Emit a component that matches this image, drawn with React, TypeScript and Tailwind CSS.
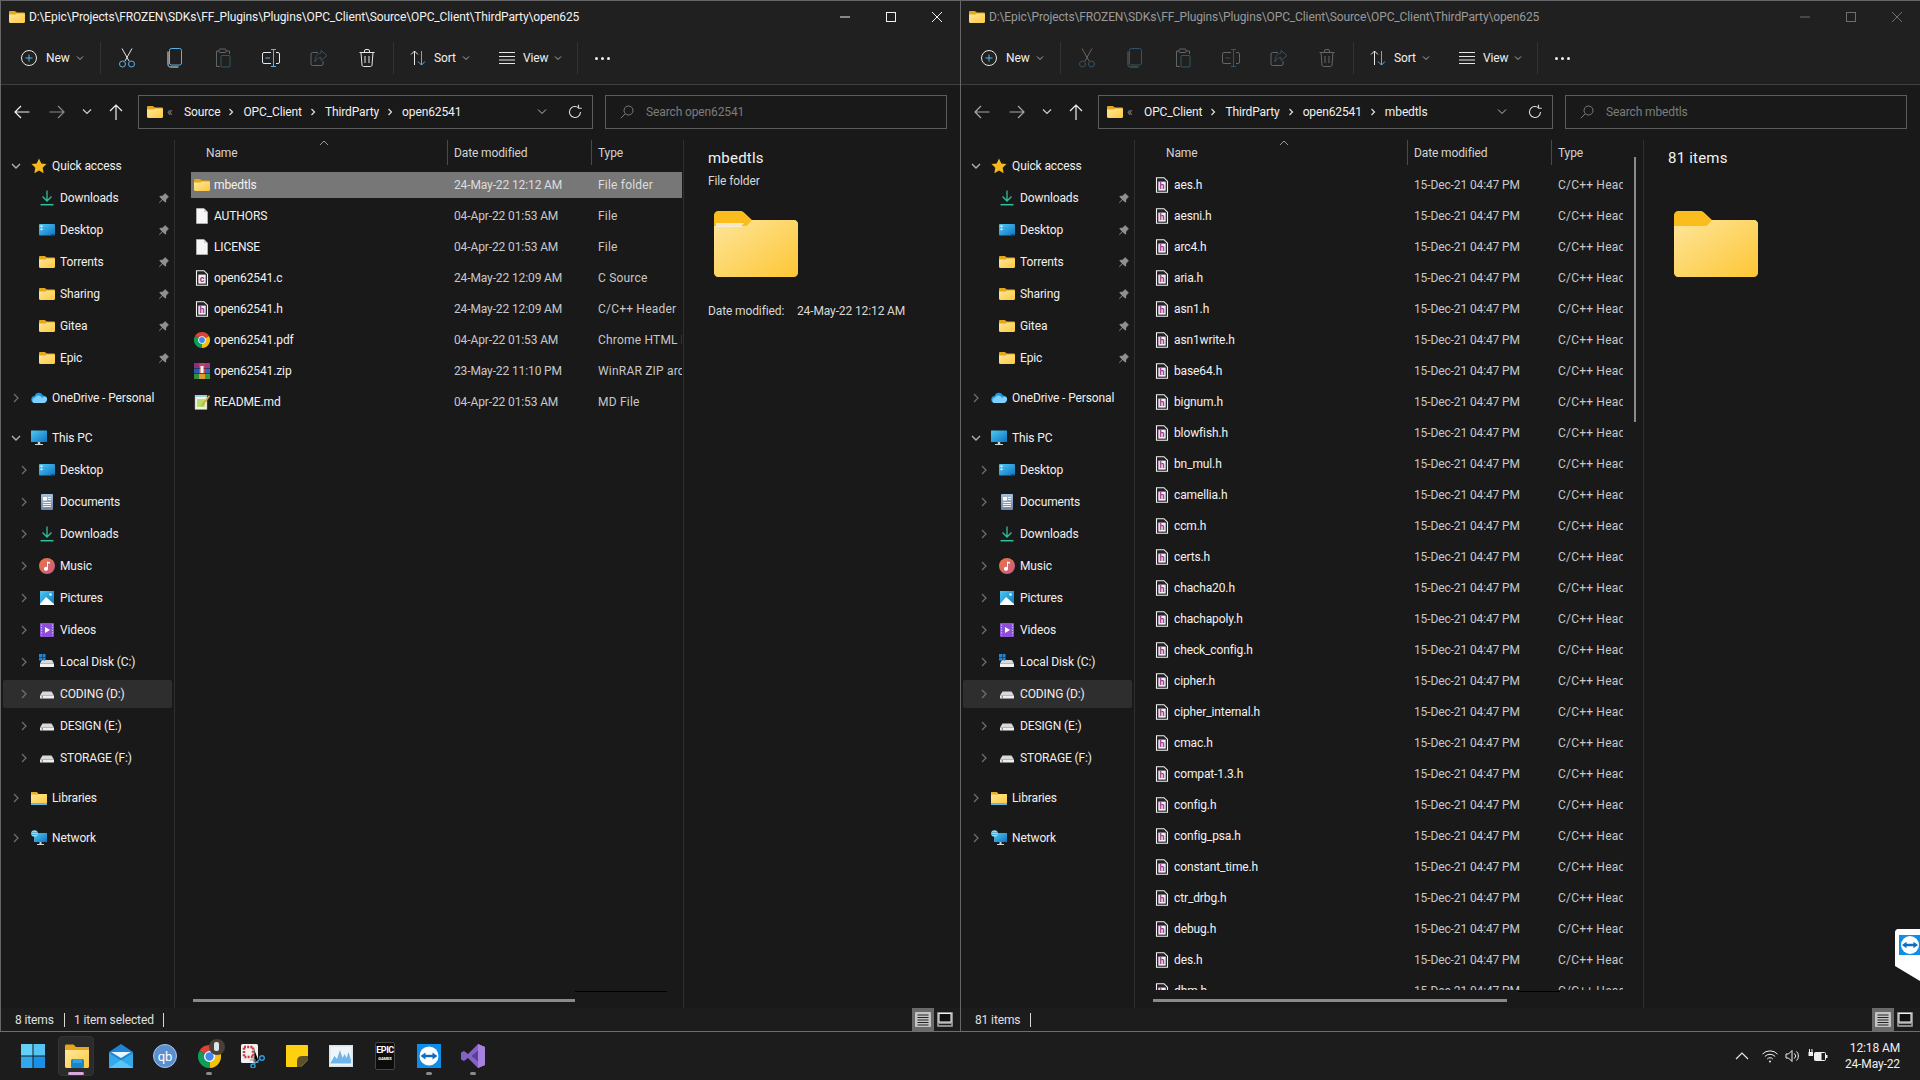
import React from 'react'

const baseFont = "font-[family-name:Roboto,'Noto_Sans',sans-serif]"

// ---------- small file / nav icons ----------

function Folder({ size = 16 }: { size?: number }) {
  return (
    <svg width={size} height={size} viewBox="0 0 16 16">
      <path d="M0 3.2C0 2.5.5 2 1.2 2h4.2c.4 0 .7.2 1 .4L8 3.6h6.8c.7 0 1.2.5 1.2 1.2V6H0z" fill="#e5a81c" />
      <path d="M0 5.6h6.5L8 4.6h6.8c.7 0 1.2.5 1.2 1.2v7c0 .7-.5 1.2-1.2 1.2H1.2C.5 14 0 13.5 0 12.8z" fill="url(#fold)" />
    </svg>
  )
}

function BigFolder({ paper }: { paper?: boolean }) {
  return (
    <svg width="84" height="66" viewBox="0 0 84 66" className="block">
      <path d="M0 4c0-2 2-4 4-4h22c2 0 3 .6 4.500 2L38 9h42c2 0 4 2 4 4v8H0z" fill="#fbbd1d" />
      <path d="M0 15h30c2 0 3-.5 4-1.500L38 9h42c2 0 4 2 4 4v49c0 2-2 4-4 4H4c-2 0-4-2-4-4z" fill="url(#bigfold)" />
      {paper && <path d="M2 12h28l-3 4H2z" fill="#f3efe0" opacity="0.85" />}
    </svg>
  )
}

function PlainFile() {
  return (
    <svg width="16" height="16" viewBox="0 0 16 16">
      <path d="M2.500.5h7.500l3.500 3.500v11.500h-11z" fill="#f6f6f6" stroke="#c8c8c8" strokeWidth="0.6" />
      <path d="M10 .5v3.500h3.500z" fill="#cfcfcf" />
    </svg>
  )
}

function CodeFile({ letter }: { letter: string }) {
  return (
    <svg width="16" height="16" viewBox="0 0 16 16">
      <path d="M2.500.7h7.500l3.500 3.500v11.100h-11z" fill="#222" stroke="#f2f2f2" strokeWidth="1.100" />
      <rect x="4.300" y="4.600" width="7.400" height="9" fill="#f3ecf4" />
      <text x="8" y="12.300" fontSize="9" fontWeight="700" textAnchor="middle" fill="#8f3a96" fontFamily="Roboto, sans-serif">{letter}</text>
    </svg>
  )
}

function ChromeIcon({ size = 16 }: { size?: number }) {
  return (
    <svg width={size} height={size} viewBox="0 0 16 16">
      <path d="M8 8L1.070 4A8 8 0 0 1 14.930 4Z" fill="#db4437" />
      <path d="M8 8L14.930 4A8 8 0 0 1 8 16Z" fill="#f4c20d" />
      <path d="M8 8L8 16A8 8 0 0 1 1.070 4Z" fill="#0f9d58" />
      <circle cx="8" cy="8" r="3.800" fill="#fff" />
      <circle cx="8" cy="8" r="2.900" fill="#4285f4" />
    </svg>
  )
}

function RarIcon() {
  return (
    <svg width="16" height="16" viewBox="0 0 16 16">
      <rect x="0" y="0" width="5" height="5" fill="#8c2f7c" />
      <rect x="5" y="0" width="6" height="5" fill="#c43f62" />
      <rect x="11" y="0" width="5" height="5" fill="#9b3a8c" />
      <rect x="0" y="5.500" width="5" height="5" fill="#2f55b5" />
      <rect x="5" y="5.500" width="6" height="5" fill="#d24a4a" />
      <rect x="11" y="5.500" width="5" height="5" fill="#3c5fc0" />
      <rect x="0" y="11" width="5" height="5" fill="#2f8f3c" />
      <rect x="5" y="11" width="6" height="5" fill="#e09a2c" />
      <rect x="11" y="11" width="5" height="5" fill="#2f9a44" />
      <rect x="6.500" y="3" width="3" height="7" fill="#f3f3f3" />
    </svg>
  )
}

function NoteIcon() {
  return (
    <svg width="16" height="16" viewBox="0 0 16 16">
      <rect x="1" y="1.500" width="12" height="14" fill="#f1f1e6" stroke="#9a9a9a" strokeWidth="0.500" />
      <rect x="1" y="1" width="12" height="2" fill="#9ccfd8" />
      <rect x="3" y="5" width="8" height="8" fill="#b8dd6a" />
      <path d="M15 1L8 10l-1 2.500L9.500 11 16 2.500z" fill="#d9a441" />
    </svg>
  )
}

function DownloadIcon() {
  return (
    <svg width="16" height="16" viewBox="0 0 16 16" fill="none" stroke="#33c19a" strokeWidth="1.300">
      <path d="M8 0.500V10.500M3.500 6.500L8 11l4.500-4.500" />
      <path d="M1.500 14.700h13" strokeWidth="1.500" />
    </svg>
  )
}

function DesktopIcon() {
  return (
    <svg width="16" height="16" viewBox="0 0 16 16">
      <rect x="0" y="2" width="16" height="11.500" rx="1" fill="url(#deskblue)" />
      <rect x="1.500" y="3.500" width="2" height="1.600" fill="#e8f7ff" />
      <rect x="1.500" y="6.500" width="2" height="1.600" fill="#e8f7ff" />
      <rect x="12" y="12.400" width="3" height="1.100" fill="#0b3f66" />
    </svg>
  )
}

function DocsIcon() {
  return (
    <svg width="16" height="16" viewBox="0 0 16 16">
      <rect x="2" y="0" width="12" height="16" rx="1" fill="url(#docgray)" />
      <rect x="4" y="3" width="4" height="3.500" fill="#fff" />
      <path d="M9 3.500h3M9 5.500h3M4 8.500h8M4 10.500h8M4 12.500h8" stroke="#fff" strokeWidth="0.900" />
    </svg>
  )
}

function MusicIcon() {
  return (
    <svg width="16" height="16" viewBox="0 0 16 16">
      <circle cx="8" cy="8" r="8" fill="url(#musicg)" />
      <path d="M8 3.500l3 .8v1.500L9 5.300v5.500a2 2 0 1 1-1-1.700z" fill="#fff" />
    </svg>
  )
}

function PicturesIcon() {
  return (
    <svg width="16" height="16" viewBox="0 0 16 16">
      <rect x="1" y="1" width="14" height="14" fill="url(#deskblue)" />
      <circle cx="11.500" cy="4.500" r="1.200" fill="#fff" />
      <path d="M1 14l6-7 8 7v1H1z" fill="#fff" />
    </svg>
  )
}

function VideosIcon() {
  return (
    <svg width="16" height="16" viewBox="0 0 16 16">
      <rect x="1" y="1" width="14" height="14" rx="1" fill="#8b4fd8" />
      <path d="M6 5l5 3-5 3z" fill="#fff" />
      <path d="M2.500 2.500v11M13.500 2.500v11" stroke="#d6bdf5" strokeWidth="1.200" strokeDasharray="1.200 1.400" />
    </svg>
  )
}

function DriveIcon() {
  return (
    <svg width="16" height="16" viewBox="0 0 16 16">
      <path d="M1 9.500L3.500 5.500h9l2.500 4z" fill="#d9d9d9" />
      <rect x="1" y="9.500" width="14" height="3" rx="0.500" fill="#efefef" />
      <rect x="2.500" y="10.500" width="1.500" height="1" fill="#444" />
    </svg>
  )
}

function SystemDriveIcon() {
  return (
    <svg width="16" height="16" viewBox="0 0 16 16">
      <path d="M1 9.500L3 6h10l2 3.500z" fill="#d9d9d9" />
      <rect x="1" y="9.500" width="14" height="3.500" rx="0.500" fill="#efefef" />
      <rect x="0" y="0" width="3" height="3" fill="#1f86d6" />
      <rect x="3.500" y="0" width="3" height="3" fill="#1f86d6" />
      <rect x="0" y="3.500" width="3" height="3" fill="#1f86d6" />
      <rect x="3.500" y="3.500" width="3" height="3" fill="#1f86d6" />
    </svg>
  )
}

function StarIcon() {
  return (
    <svg width="16" height="16" viewBox="0 0 16 16">
      <path d="M8 .5l2.300 4.900 5.200.7-3.800 3.700.9 5.400L8 12.600l-4.600 2.600.9-5.400L.5 6.100l5.200-.7z" fill="#f5b81f" />
    </svg>
  )
}

function CloudIcon() {
  return (
    <svg width="16" height="16" viewBox="0 0 16 16">
      <path d="M4 13a3.500 3.500 0 0 1-.4-7A4.500 4.500 0 0 1 12 5.500 3.800 3.800 0 0 1 12.500 13z" fill="#1b9bea" />
      <path d="M3 13a3 3 0 0 1 1-5.600A4 4 0 0 1 11 8a2.500 2.500 0 0 1 4.800 2.500A3 3 0 0 1 13 13z" fill="#7cd0fa" />
    </svg>
  )
}

function PcIcon() {
  return (
    <svg width="16" height="16" viewBox="0 0 16 16">
      <rect x="0" y="0.500" width="16" height="11.500" rx="0.500" fill="url(#deskblue)" />
      <rect x="6.800" y="12" width="2.400" height="2" fill="#cfd8dd" />
      <rect x="4" y="14" width="8" height="1" fill="#cfd8dd" />
    </svg>
  )
}

function LibraryIcon() {
  return (
    <svg width="16" height="16" viewBox="0 0 16 16">
      <path d="M0 2h6l1.500 2H16v9.500H0z" fill="#e9ad22" />
      <path d="M0 4.500h7L8 4h8v9.500H0z" fill="url(#fold)" />
      <rect x="0" y="13.500" width="16" height="1.500" fill="#6ab7e8" />
    </svg>
  )
}

function NetworkIcon() {
  return (
    <svg width="16" height="16" viewBox="0 0 16 16">
      <rect x="3" y="3" width="13" height="9" fill="url(#deskblue)" />
      <rect x="8.500" y="12" width="2" height="2" fill="#cfd8dd" />
      <rect x="6" y="14" width="7" height="1" fill="#cfd8dd" />
      <circle cx="3.500" cy="3.500" r="3.300" fill="#8fdcf5" />
      <path d="M1 2.500h5M1 4.500h5" stroke="#2a86bb" strokeWidth="0.500" />
    </svg>
  )
}

function Pin() {
  return (
    <svg width="12" height="12" viewBox="0 0 12 12">
      <path d="M7 1l4 4-1 .5-2 2.500.2 2-1 .6L4.600 8 1.500 11 1 10.500 4 7.400 1.400 4.800 2 3.800l2 .2L6.500 2z" fill="#8f8f8f" />
    </svg>
  )
}

function NavChevron({ open }: { open?: boolean }) {
  return (
    <svg width="12" height="12" viewBox="0 0 12 12" fill="none" stroke={open ? '#b8b8b8' : '#6f6f6f'} strokeWidth="1.300">
      {open ? <path d="M2 4l4 4 4-4" /> : <path d="M4 2l4 4-4 4" />}
    </svg>
  )
}

// ---------- toolbar icons ----------

function Chevron({ color = '#b0b0b0' }: { color?: string }) {
  return (
    <svg width="8" height="8" viewBox="0 0 8 8" fill="none" stroke={color} strokeWidth="1">
      <path d="M1 2.500l3 3 3-3" />
    </svg>
  )
}

const W = '#e6e6e6'
const B = '#59b4e8'

function Cut() {
  return (
    <svg width="18" height="20" viewBox="0 0 18 20" fill="none" strokeWidth="1">
      <path d="M4 0.500l7 12.500M14 0.500L7 13" stroke={W} />
      <circle cx="4.500" cy="16" r="3" stroke={B} />
      <circle cx="13.500" cy="16" r="3" stroke={B} />
    </svg>
  )
}

function CopyIco() {
  return (
    <svg width="16" height="20" viewBox="0 0 16 20" fill="none" strokeWidth="1">
      <rect x="2.500" y="0.500" width="12" height="16.500" rx="2" stroke={B} />
      <path d="M1 3.500v13c0 1.500 1 2.500 2.500 2.500h8" stroke={W} />
    </svg>
  )
}

function PasteIco() {
  return (
    <svg width="16" height="20" viewBox="0 0 16 20" fill="none" strokeWidth="1">
      <path d="M4 3H1.500v15.500H5" stroke={W} />
      <path d="M11 3h3.500v3" stroke={W} />
      <rect x="4" y="1" width="7" height="3.500" rx="1" stroke={W} />
      <rect x="6" y="7.500" width="9" height="11.500" rx="1" stroke={B} />
    </svg>
  )
}

function RenameIco() {
  return (
    <svg width="18" height="18" viewBox="0 0 18 18" fill="none" strokeWidth="1">
      <path d="M9 3.500H2a1.500 1.500 0 0 0-1.500 1.500v8A1.500 1.500 0 0 0 2 14.500h7M14 3.500h2a1.500 1.500 0 0 1 1.500 1.500v8a1.500 1.500 0 0 1-1.500 1.500h-2" stroke={W} />
      <path d="M11.500 1v16M9 .5h5M9 17.500h5M3.500 9H8" stroke={B} />
    </svg>
  )
}

function ShareIco() {
  return (
    <svg width="18" height="18" viewBox="0 0 18 18" fill="none" strokeWidth="1">
      <path d="M8 3.500H2.500a1.500 1.500 0 0 0-1.500 1.500v10a1.500 1.500 0 0 0 1.500 1.500h9A1.500 1.500 0 0 0 13 15v-3" stroke={W} />
      <path d="M11 1.500L17 6.500 11 11.500V8.500C8 8.500 6 10 5 13c0-5 2-8.500 6-9z" stroke={B} />
    </svg>
  )
}

function TrashIco() {
  return (
    <svg width="16" height="18" viewBox="0 0 16 18" fill="none" stroke={W} strokeWidth="1">
      <path d="M0.500 3.500h15M5.500 3.500V2A1.500 1.500 0 0 1 7 .5h2A1.500 1.500 0 0 1 10.500 2v1.500" />
      <path d="M2 3.500l1 12.500c0 1 .8 1.500 1.500 1.500h7c.7 0 1.500-.5 1.500-1.500l1-12.500M6 7v7M10 7v7" />
    </svg>
  )
}

function ToolBtn({ dim, children }: { dim?: boolean; children: React.ReactNode }) {
  return (
    <div className={`w-[48px] h-full flex items-center justify-center ${dim ? 'opacity-35' : ''}`}>
      {children}
    </div>
  )
}

function ToolSep() {
  return <div className="w-px h-[32px] bg-[#333333]" />
}

function Toolbar({ hasSelection }: { hasSelection: boolean }) {
  return (
    <div className="h-[53px] flex items-center border-b border-[#3f3f3f] bg-[#202020] text-[#f0f0f0]">
      <div className="w-[99px] h-full pl-[20px] flex items-center">
        <svg width="16" height="16" viewBox="0 0 16 16" fill="none">
          <circle cx="8" cy="8" r="7.500" stroke={W} />
          <path d="M8 4.500v7M4.500 8h7" stroke={B} />
        </svg>
        <span className="ml-[9px]">New</span>
        <span className="ml-[6px] flex"><Chevron /></span>
      </div>
      <ToolSep />
      <div className="w-[2px]" />
      <div className="flex h-full w-[288px]">
        <ToolBtn dim={!hasSelection}><Cut /></ToolBtn>
        <ToolBtn dim={!hasSelection}><CopyIco /></ToolBtn>
        <ToolBtn dim><PasteIco /></ToolBtn>
        <ToolBtn dim={!hasSelection}><RenameIco /></ToolBtn>
        <ToolBtn dim><ShareIco /></ToolBtn>
        <ToolBtn dim={!hasSelection}><TrashIco /></ToolBtn>
      </div>
      <div className="w-[2px]" />
      <ToolSep />
      <div className="w-[16px]" />
      <svg width="16" height="16" viewBox="0 0 16 16" fill="none">
        <path d="M4.500 15V1M1 4.500L4.500 1 8 4.500" stroke={W} />
        <path d="M11.500 1v14M8 11.500l3.500 3.500 3.500-3.500" stroke={B} />
      </svg>
      <span className="ml-[8px] w-[28px]">Sort</span>
      <span className="flex"><Chevron /></span>
      <div className="w-[29px]" />
      <svg width="16" height="12" viewBox="0 0 16 12" fill="none" stroke={W}>
        <path d="M0 .5h16M0 4.500h16M0 8h16M0 11.500h16" />
      </svg>
      <span className="ml-[8px] w-[30px]">View</span>
      <span className="ml-[1px] flex"><Chevron /></span>
      <div className="w-[15px]" />
      <ToolSep />
      <div className="ml-[17px] flex gap-[3px]">
        <div className="w-[3px] h-[3px] rounded-full bg-[#f0f0f0]" />
        <div className="w-[3px] h-[3px] rounded-full bg-[#f0f0f0]" />
        <div className="w-[3px] h-[3px] rounded-full bg-[#f0f0f0]" />
      </div>
    </div>
  )
}

function Crumb() {
  return (
    <svg width="23" height="8" viewBox="0 0 23 8" fill="none" stroke="#e0e0e0" strokeWidth="1.200">
      <path d="M9.500 1l3 3-3 3" />
    </svg>
  )
}

function AddressRow({ crumbs, search, active }: { crumbs: string[]; search: string; active: boolean }) {
  const arrow = active ? '#f0f0f0' : '#a8a8a8'
  return (
    <div className="h-[55px] pt-[10px] pl-[13px] flex items-start bg-[#191919]">
      <div className="h-[34px] flex items-center">
        <svg width="16" height="14" viewBox="0 0 16 14" fill="none" stroke={arrow} strokeWidth="1.200">
          <path d="M15.500 7H1M7 1L1 7l6 6" />
        </svg>
        <svg className="ml-[19px]" width="16" height="14" viewBox="0 0 16 14" fill="none" stroke={active ? '#8a8a8a' : '#a8a8a8'} strokeWidth="1.200">
          <path d="M.5 7H15M9 1l6 6-6 6" />
        </svg>
        <svg className="ml-[17px]" width="10" height="8" viewBox="0 0 10 8" fill="none" stroke="#cfcfcf" strokeWidth="1.200">
          <path d="M1 1.500l4 4 4-4" />
        </svg>
        <svg className="ml-[16px]" width="16" height="16" viewBox="0 0 16 16" fill="none" stroke="#f0f0f0" strokeWidth="1.200">
          <path d="M8 16V1M2 7l6-6 6 6" />
        </svg>
      </div>
      <div className="ml-[14px] w-[455px] h-[34px] border border-[#5c5c5c] pl-[8px] flex items-center text-[#f0f0f0]">
        <Folder />
        <span className="w-[21px] pl-[4px] text-[12px] text-[#8a8a8a]">«</span>
        {crumbs.map((c, i) => (
          <React.Fragment key={c}>
            {i > 0 && <Crumb />}
            <span>{c}</span>
          </React.Fragment>
        ))}
        <svg className="ml-auto" width="10" height="8" viewBox="0 0 10 8" fill="none" stroke="#bdbdbd">
          <path d="M1 1.500l4 4 4-4" />
        </svg>
        <svg className="ml-[20px] mr-[9px]" width="16" height="16" viewBox="0 0 16 16" fill="none" stroke="#d8d8d8" strokeWidth="1.100">
          <path d="M13.500 8a5.500 5.500 0 1 1-1.800-4.100M11.500 .8v3.400h3.300" />
        </svg>
      </div>
      <div className="ml-[12px] w-[342px] h-[34px] border border-[#5c5c5c] pl-[14px] flex items-center text-[#7d7d7d]">
        <svg width="14" height="14" viewBox="0 0 14 14" fill="none" stroke="#7d7d7d">
          <circle cx="8.500" cy="5.500" r="4.500" />
          <path d="M5.200 8.800L.8 13.200" />
        </svg>
        <span className="ml-[12px]">{search}</span>
      </div>
    </div>
  )
}

// ---------- nav pane ----------

type NavItem = {
  label: string
  icon: React.ReactNode
  level: number
  chevron?: 'open' | 'closed'
  pinned?: boolean
  selected?: boolean
  gap?: boolean
}

const navItems: NavItem[] = [
  { label: 'Quick access', icon: <StarIcon />, level: 0, chevron: 'open' },
  { label: 'Downloads', icon: <DownloadIcon />, level: 1, pinned: true },
  { label: 'Desktop', icon: <DesktopIcon />, level: 1, pinned: true },
  { label: 'Torrents', icon: <Folder />, level: 1, pinned: true },
  { label: 'Sharing', icon: <Folder />, level: 1, pinned: true },
  { label: 'Gitea', icon: <Folder />, level: 1, pinned: true },
  { label: 'Epic', icon: <Folder />, level: 1, pinned: true },
  { label: 'OneDrive - Personal', icon: <CloudIcon />, level: 0, chevron: 'closed', gap: true },
  { label: 'This PC', icon: <PcIcon />, level: 0, chevron: 'open', gap: true },
  { label: 'Desktop', icon: <DesktopIcon />, level: 1, chevron: 'closed' },
  { label: 'Documents', icon: <DocsIcon />, level: 1, chevron: 'closed' },
  { label: 'Downloads', icon: <DownloadIcon />, level: 1, chevron: 'closed' },
  { label: 'Music', icon: <MusicIcon />, level: 1, chevron: 'closed' },
  { label: 'Pictures', icon: <PicturesIcon />, level: 1, chevron: 'closed' },
  { label: 'Videos', icon: <VideosIcon />, level: 1, chevron: 'closed' },
  { label: 'Local Disk (C:)', icon: <SystemDriveIcon />, level: 1, chevron: 'closed' },
  { label: 'CODING (D:)', icon: <DriveIcon />, level: 1, chevron: 'closed', selected: true },
  { label: 'DESIGN (E:)', icon: <DriveIcon />, level: 1, chevron: 'closed' },
  { label: 'STORAGE (F:)', icon: <DriveIcon />, level: 1, chevron: 'closed' },
  { label: 'Libraries', icon: <LibraryIcon />, level: 0, chevron: 'closed', gap: true },
  { label: 'Network', icon: <NetworkIcon />, level: 0, chevron: 'closed', gap: true },
]

function NavPane() {
  return (
    <div className="w-[174px] h-full border-r border-[#2f2f2f] pt-[10px] pl-[2px] text-[#f0f0f0]">
      {navItems.map((item, i) => (
        <div key={i} className={`h-[32px] flex items-center ${item.gap ? 'mt-[8px]' : ''}`}>
          <div className={`w-[169px] h-[28px] flex items-center rounded-[2px] ${item.level ? 'pl-[15px]' : 'pl-[7px]'} ${item.selected ? 'bg-[#2e2e2e]' : ''}`}>
            <div className="w-[12px] flex">
              {item.chevron && <NavChevron open={item.chevron === 'open'} />}
            </div>
            <div className="ml-[7px] w-[20px] flex justify-center">{item.icon}</div>
            <span className="ml-[3px] whitespace-nowrap">{item.label}</span>
            {item.pinned && <span className="ml-auto mr-[2px] flex"><Pin /></span>}
          </div>
        </div>
      ))}
    </div>
  )
}

// ---------- file list ----------

type FileRow = { name: string; date: string; type: string; icon: React.ReactNode; selected?: boolean }

const leftFiles: FileRow[] = [
  { name: 'mbedtls', date: '24-May-22 12:12 AM', type: 'File folder', icon: <Folder />, selected: true },
  { name: 'AUTHORS', date: '04-Apr-22 01:53 AM', type: 'File', icon: <PlainFile /> },
  { name: 'LICENSE', date: '04-Apr-22 01:53 AM', type: 'File', icon: <PlainFile /> },
  { name: 'open62541.c', date: '24-May-22 12:09 AM', type: 'C Source', icon: <CodeFile letter="c" /> },
  { name: 'open62541.h', date: '24-May-22 12:09 AM', type: 'C/C++ Header', icon: <CodeFile letter="h" /> },
  { name: 'open62541.pdf', date: '04-Apr-22 01:53 AM', type: 'Chrome HTML Document', icon: <ChromeIcon /> },
  { name: 'open62541.zip', date: '23-May-22 11:10 PM', type: 'WinRAR ZIP archive', icon: <RarIcon /> },
  { name: 'README.md', date: '04-Apr-22 01:53 AM', type: 'MD File', icon: <NoteIcon /> },
]

const headerNames = [
  'aes.h', 'aesni.h', 'arc4.h', 'aria.h', 'asn1.h', 'asn1write.h', 'base64.h', 'bignum.h', 'blowfish.h',
  'bn_mul.h', 'camellia.h', 'ccm.h', 'certs.h', 'chacha20.h', 'chachapoly.h', 'check_config.h', 'cipher.h',
  'cipher_internal.h', 'cmac.h', 'compat-1.3.h', 'config.h', 'config_psa.h', 'constant_time.h', 'ctr_drbg.h',
  'debug.h', 'des.h', 'dhm.h',
]

const rightFiles: FileRow[] = headerNames.map((name) => ({
  name,
  date: '15-Dec-21 04:47 PM',
  type: 'C/C++ Header',
  icon: <CodeFile letter="h" />,
}))

function FileList({ files, rowWidth, barWidth, lineLeft, lineWidth, vscroll }: {
  files: FileRow[]
  rowWidth: string
  barWidth: string
  lineLeft: string
  lineWidth: string
  vscroll?: boolean
}) {
  return (
    <div className="relative w-[509px] h-full border-r border-[#2f2f2f] flex flex-col">
      <div className="h-[32px] flex items-start text-[#d4d4d4]">
        <div className="relative w-[273px] h-[25px] pl-[31px] flex items-center border-r border-[#4a4a4a]">
          Name
          <svg className="absolute left-[144px] top-[0px]" width="10" height="6" viewBox="0 0 10 6" fill="none" stroke="#9a9a9a">
            <path d="M1 5l4-4 4 4" />
          </svg>
        </div>
        <div className="w-[144px] h-[25px] pl-[6px] flex items-center border-r border-[#4a4a4a]">Date modified</div>
        <div className="h-[25px] pl-[6px] flex items-center">Type</div>
      </div>
      <div className="h-[818px] overflow-hidden pl-[16px]">
        {files.map((f) => (
          <div key={f.name} className={`${rowWidth} h-[26px] mb-[5px] flex items-center overflow-hidden whitespace-nowrap ${f.selected ? 'bg-[#777777]' : ''}`}>
            <div className="w-[263px] shrink-0 pl-[3px] flex items-center text-[#f2f2f2]">
              {f.icon}
              <span className="ml-[4px]">{f.name}</span>
            </div>
            <div className={`w-[144px] shrink-0 ${f.selected ? 'text-[#dddddd]' : 'text-[#c8c8c8]'}`}>{f.date}</div>
            <div className={`shrink-0 tracking-[0.2px] ${f.selected ? 'text-[#dddddd]' : 'text-[#c8c8c8]'}`}>{f.type}</div>
          </div>
        ))}
      </div>
      <div className={`${lineLeft} ${lineWidth} h-px bg-black mt-[1px]`} />
      <div className={`ml-[18px] ${barWidth} h-[3px] bg-[#8a8a8a] mt-[7px]`} />
      {vscroll && <div className="absolute left-[499px] top-[17px] w-[2px] h-[265px] bg-[#8a8a8a]" />}
    </div>
  )
}

function Window({ title, active, crumbs, search, files, details, status, rowWidth, barWidth, lineLeft, lineWidth, vscroll }: {
  title: string
  active: boolean
  crumbs: string[]
  search: string
  files: FileRow[]
  details: React.ReactNode
  status: React.ReactNode
  rowWidth: string
  barWidth: string
  lineLeft: string
  lineWidth: string
  vscroll?: boolean
}) {
  const ctl = active ? '#f0f0f0' : '#6e6e6e'
  return (
    <div className="w-[960px] h-[1031px] border-t border-l border-[#666666] flex flex-col bg-[#191919]">
      <div className="h-[31px] pl-[8px] flex items-center bg-[#202020]">
        <Folder />
        <span className={`ml-[4px] whitespace-nowrap ${active ? 'text-[#f2f2f2]' : 'text-[#9a9a9a]'}`}>{title}</span>
        <div className="ml-auto flex">
          <div className="w-[46px] flex justify-center">
            <svg width="12" height="12" viewBox="0 0 12 12" stroke={ctl}><path d="M1 6h10" /></svg>
          </div>
          <div className="w-[46px] flex justify-center">
            <svg width="12" height="12" viewBox="0 0 12 12" fill="none" stroke={ctl}><rect x="1.500" y="1.500" width="9" height="9" /></svg>
          </div>
          <div className="w-[46px] flex justify-center">
            <svg width="12" height="12" viewBox="0 0 12 12" stroke={ctl}><path d="M1 1l10 10M11 1L1 11" /></svg>
          </div>
        </div>
      </div>
      <Toolbar hasSelection={active} />
      <AddressRow crumbs={crumbs} search={search} active={active} />
      <div className="h-[868px] flex">
        <NavPane />
        <FileList files={files} rowWidth={rowWidth} barWidth={barWidth} lineLeft={lineLeft} lineWidth={lineWidth} vscroll={vscroll} />
        <div className="flex-1 pl-[24px] pt-[7px]">{details}</div>
      </div>
      <div className="flex-1 pl-[14px] flex items-center bg-[#1c1c1c] text-[#e0e0e0]">
        {status}
        <div className="ml-auto mr-[4px] flex items-stretch h-full">
          <div className="w-[22px] bg-[#6a6a6a] flex items-center justify-center">
            <svg width="16" height="15" viewBox="0 0 16 15">
              <rect width="16" height="15" rx="1" fill="#c4c4c4" />
              <path d="M2.500 3h11M2.500 5.500h11M2.500 8h11M2.500 10.500h11M2.500 13h11" stroke="#222" />
            </svg>
          </div>
          <div className="w-[22px] flex items-center justify-center">
            <svg width="16" height="15" viewBox="0 0 16 15">
              <rect width="16" height="15" rx="1" fill="#8d8d8d" />
              <rect x="2" y="1.500" width="12" height="8.500" fill="#111" stroke="#f5f5f5" />
              <path d="M2 12.500h12" stroke="#222" />
            </svg>
          </div>
        </div>
      </div>
    </div>
  )
}

const StatusSep = () => <div className="w-px h-[14px] bg-[#d8d8d8]" />

// ---------- taskbar ----------

function TaskIcon({ dot, active, children }: { dot?: boolean; active?: boolean; children: React.ReactNode }) {
  return (
    <div className="relative w-[44px] h-full flex items-center justify-center">
      {active && <div className="absolute left-[3px] top-[4px] w-[36px] h-[40px] rounded-[4px] bg-[#2b2b2b] border border-[#333333]" />}
      <div className="relative flex">{children}</div>
      {dot && <div className="absolute left-[19px] bottom-[5px] w-[6px] h-[3px] rounded-full bg-[#8a8a8a]" />}
      {active && <div className="absolute left-[13px] bottom-[5px] w-[16px] h-[3px] rounded-full bg-[#d9a8dc]" />}
    </div>
  )
}

function Taskbar() {
  return (
    <div className="h-[49px] border-t border-[#6e6e6e] bg-[#1c1c1c] pl-[11px] flex items-center">
      <TaskIcon>
        <svg width="24" height="24" viewBox="0 0 24 24">
          <rect x="0" y="0" width="11.500" height="11.500" fill="#63d0f7" />
          <rect x="12.500" y="0" width="11.500" height="11.500" fill="#55c4f5" />
          <rect x="0" y="12.500" width="11.500" height="11.500" fill="#2fa8ee" />
          <rect x="12.500" y="12.500" width="11.500" height="11.500" fill="#1a8fe6" />
        </svg>
      </TaskIcon>
      <TaskIcon active>
        <svg width="24" height="24" viewBox="0 0 24 24">
          <path d="M0 2c0-1 .7-1.500 1.500-1.500h7L11 3h13v4H0z" fill="#e5a81c" />
          <path d="M0 6h24v16.500c0 .8-.7 1.500-1.500 1.500h-21C.7 24 0 23.300 0 22.500z" fill="url(#fold)" />
          <rect x="6" y="15" width="13" height="9" rx="1.500" fill="#1b83c8" />
          <rect x="8" y="15" width="9" height="4" fill="#2ba2e4" />
        </svg>
      </TaskIcon>
      <TaskIcon>
        <svg width="24" height="24" viewBox="0 0 24 24">
          <path d="M0 8l12-8 12 8v16H0z" fill="#1c86d4" />
          <path d="M2 8h20L12 14z" fill="#eaf6ff" />
          <path d="M0 9l12 7.500L24 9v15H0z" fill="#33a9ea" />
          <path d="M0 24l12-8 12 8z" fill="#5cc4f5" />
        </svg>
      </TaskIcon>
      <TaskIcon>
        <div className="w-[24px] h-[24px] rounded-full bg-[#5c8fd0] border border-[#a9c6ea] flex items-center justify-center text-white text-[13px] leading-none">qb</div>
      </TaskIcon>
      <TaskIcon dot>
        <ChromeIcon size={23} />
        <div className="absolute left-[11px] top-[-6px] w-[16px] h-[16px] rounded-full bg-[#4b4037] flex items-center justify-center">
          <div className="w-[5px] h-[9px] rounded-[2px] bg-[#dfe4e8]" />
        </div>
      </TaskIcon>
      <TaskIcon>
        <svg width="24" height="24" viewBox="0 0 24 24">
          <rect x="0" y="0" width="17" height="19" rx="1.500" fill="#f1f1f1" />
          <rect x="3" y="3" width="9" height="10" fill="none" stroke="#d0393d" strokeWidth="2.500" strokeDasharray="2 1.200" />
          <path d="M13 5v13l5 0M9 16l6 0" stroke="#8a8a8a" strokeWidth="1.200" />
          <circle cx="21" cy="14" r="2.300" fill="none" stroke="#2f9bd8" strokeWidth="1.500" />
          <circle cx="12" cy="22" r="2" fill="none" stroke="#2f9bd8" strokeWidth="1.500" />
          <path d="M19 15l-6 5" stroke="#2f9bd8" strokeWidth="1.200" />
        </svg>
      </TaskIcon>
      <TaskIcon>
        <svg width="22" height="22" viewBox="0 0 22 22">
          <path d="M1 0h20c.6 0 1 .4 1 1v14l-7 7H1c-.6 0-1-.4-1-1V1c0-.6.4-1 1-1z" fill="#fdd10f" />
          <path d="M22 11v4l-7 7h-4v-6c0-2 1-5 5-5z" fill="#5e5128" />
        </svg>
      </TaskIcon>
      <TaskIcon>
        <svg width="24" height="22" viewBox="0 0 24 22">
          <rect x="0" y="0" width="24" height="22" fill="#d9e3ec" />
          <rect x="1.500" y="1.500" width="21" height="19" fill="#f0f5f9" />
          <path d="M1.500 18l4-7 2.500 3 3-9 2.500 8 2-4 2 4 2-6 2.500 8v3.500h-20z" fill="#6eb6ea" />
        </svg>
      </TaskIcon>
      <TaskIcon>
        <div className="w-[20px] h-[28px] bg-[#0c0c0c] border border-[#444] rounded-[2px] flex flex-col items-center justify-start text-white leading-none pt-[3px] tracking-normal">
          <span className="text-[9px] font-bold tracking-[-0.5px]">EPIC</span>
          <span className="text-[4px] font-bold mt-[2px]">GAMES</span>
        </div>
      </TaskIcon>
      <TaskIcon dot>
        <svg width="24" height="24" viewBox="0 0 24 24">
          <rect width="24" height="24" fill="#0e8ee9" />
          <circle cx="12" cy="12" r="9.500" fill="#fff" />
          <path d="M3.500 12l5-3.500v2.200h7V8.500l5 3.500-5 3.500v-2.200h-7v2.200z" fill="#0e6fc2" />
        </svg>
      </TaskIcon>
      <TaskIcon dot>
        <svg width="24" height="26" viewBox="0 0 24 26">
          <path d="M17 1l7 3v18l-7 3L7 15l-4 3-3-1.500V9.500L3 8l4 3z" fill="#8661c5" />
          <path d="M17 8v10l-6-5z" fill="#1c1c1c" />
          <path d="M17 1l7 3v18l-7 3z" fill="#a582e0" />
          <path d="M17 8l-6 5 6 5z" fill="#5d3ea0" />
        </svg>
      </TaskIcon>
      <div className="ml-auto mr-[20px] flex items-center text-[#f0f0f0]">
        <svg width="14" height="8" viewBox="0 0 14 8" fill="none" stroke="#e8e8e8" strokeWidth="1.200">
          <path d="M1 7l6-6 6 6" />
        </svg>
        <svg className="ml-[13px]" width="16" height="14" viewBox="0 0 16 14" fill="none" stroke="#f0f0f0">
          <path d="M.5 5a10.500 10.500 0 0 1 15 0M2.800 7.500a7.200 7.200 0 0 1 10.400 0M5.200 10a3.800 3.800 0 0 1 5.600 0" />
          <circle cx="8" cy="12.500" r="1" fill="#f0f0f0" stroke="none" />
        </svg>
        <svg className="ml-[7px]" width="16" height="14" viewBox="0 0 16 14" fill="none" stroke="#f0f0f0">
          <path d="M1 5h2.500L7 1.500v11L3.500 9H1z" />
          <path d="M9.500 4.500a3.500 3.500 0 0 1 0 5M11.500 2.500a6.200 6.200 0 0 1 0 9" />
        </svg>
        <svg className="ml-[7px]" width="20" height="14" viewBox="0 0 20 14">
          <rect x="6.500" y="3.500" width="11" height="8" rx="1" fill="none" stroke="#f0f0f0" />
          <rect x="6.500" y="3.500" width="7" height="8" fill="#f0f0f0" />
          <rect x="18" y="6" width="1.500" height="3" fill="#f0f0f0" />
          <path d="M1.500 0v3M4 0v3" stroke="#f0f0f0" />
          <rect x="0.500" y="3" width="4.500" height="4" fill="#f0f0f0" />
        </svg>
        <div className="ml-[14px] w-[58px] text-right text-[12px] leading-[16px] whitespace-nowrap flex flex-col items-end">
          <span>12:18 AM</span>
          <span>24-May-22</span>
        </div>
      </div>
    </div>
  )
}

export default function App() {
  return (
    <div className={`relative w-[1920px] h-[1080px] overflow-hidden bg-[#191919] text-[12px] tracking-[-0.12px] ${baseFont}`}>
      <svg className="absolute w-0 h-0">
        <defs>
          <linearGradient id="fold" x1="0" y1="0" x2="1" y2="1">
            <stop offset="0" stopColor="#fee79a" />
            <stop offset="1" stopColor="#fdc93f" />
          </linearGradient>
          <linearGradient id="bigfold" x1="0" y1="0" x2="1" y2="1">
            <stop offset="0" stopColor="#fee59b" />
            <stop offset="1" stopColor="#fdc734" />
          </linearGradient>
          <linearGradient id="deskblue" x1="0" y1="0" x2="1" y2="1">
            <stop offset="0" stopColor="#4dc9f2" />
            <stop offset="1" stopColor="#0f74c4" />
          </linearGradient>
          <linearGradient id="docgray" x1="0" y1="0" x2="0" y2="1">
            <stop offset="0" stopColor="#a9bdd6" />
            <stop offset="1" stopColor="#6e86a8" />
          </linearGradient>
          <linearGradient id="musicg" x1="0" y1="0" x2="1" y2="1">
            <stop offset="0" stopColor="#f0783c" />
            <stop offset="1" stopColor="#c25a8c" />
          </linearGradient>
        </defs>
      </svg>

      <div className="flex">
        <Window
          title="D:\Epic\Projects\FROZEN\SDKs\FF_Plugins\Plugins\OPC_Client\Source\OPC_Client\ThirdParty\open625"
          active
          crumbs={['Source', 'OPC_Client', 'ThirdParty', 'open62541']}
          search="Search open62541"
          files={leftFiles}
          rowWidth="w-[491px]"
          barWidth="w-[382px]"
          lineLeft="ml-[400px]"
          lineWidth="w-[92px]"
          details={
            <div>
              <div className="h-[22px] flex items-center text-[15px] tracking-[0.2px] text-[#f2f2f2]">mbedtls</div>
              <div className="h-[18px] mt-[3px] flex items-center text-[#d8d8d8]">File folder</div>
              <div className="mt-[21px] ml-[6px]"><BigFolder paper /></div>
              <div className="mt-[25px] h-[18px] flex items-center text-[#d8d8d8]">
                <span className="w-[89px]">Date modified:</span>
                <span>24-May-22 12:12 AM</span>
              </div>
            </div>
          }
          status={
            <>
              <span className="w-[49px]">8 items</span>
              <StatusSep />
              <span className="ml-[9px] w-[89px]">1 item selected</span>
              <StatusSep />
            </>
          }
        />
        <Window
          title="D:\Epic\Projects\FROZEN\SDKs\FF_Plugins\Plugins\OPC_Client\Source\OPC_Client\ThirdParty\open625"
          active={false}
          crumbs={['OPC_Client', 'ThirdParty', 'open62541', 'mbedtls']}
          search="Search mbedtls"
          files={rightFiles}
          rowWidth="w-[472px]"
          barWidth="w-[354px]"
          lineLeft="ml-[383px]"
          lineWidth="w-[42px]"
          vscroll
          details={
            <div>
              <div className="h-[22px] flex items-center text-[15px] tracking-[0.2px] text-[#f2f2f2]">81 items</div>
              <div className="h-[18px] mt-[3px]" />
              <div className="mt-[21px] ml-[6px]"><BigFolder /></div>
            </div>
          }
          status={
            <>
              <span className="w-[55px]">81 items</span>
              <StatusSep />
            </>
          }
        />
      </div>

      <Taskbar />

      {/* TeamViewer side tab sitting over the window edge */}
      <svg className="absolute right-0 top-[929px]" width="25" height="52" viewBox="0 0 25 52">
        <path d="M25 0H3C1.500 0 0 1.500 0 3v34l25 15z" fill="#ffffff" />
        <rect x="4" y="6" width="21" height="20" fill="#0e8ee9" />
        <circle cx="15" cy="16" r="9" fill="#fff" />
        <path d="M7 16l4.500-3.200v2h7v-2l4.500 3.200-4.500 3.200v-2h-7v2z" fill="#0e6fc2" />
      </svg>
    </div>
  )
}
